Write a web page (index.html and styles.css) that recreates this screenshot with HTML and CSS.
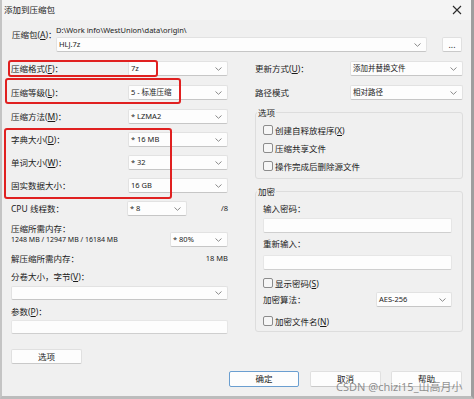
FILE: index.html
```html
<!DOCTYPE html>
<html lang="zh">
<head>
<meta charset="utf-8">
<title>添加到压缩包</title>
<link rel="stylesheet" href="styles.css">
</head>
<body>
<div class="win">
  <div class="titlebar">
    <span class="title">添加到压缩包</span>
    <svg class="close" width="10" height="10" viewBox="0 0 10 10"><path d="M1 1L9 9M9 1L1 9" stroke="#2b2b2b" stroke-width="1.1" fill="none"/></svg>
  </div>
  <div class="content">
    <div class="archive">
      <span class="lbl arch-lbl">压缩包(<u>A</u>)：</span>
      <div class="arch-main">
        <div class="path">D:\Work info\WestUnion\data\origin\</div>
        <div class="arch-row">
          <div class="combo arch-combo"><span class="val">HLJ.7z</span><svg class="chev" width="7" height="4" viewBox="0 0 7 4"><path d="M0.5 0.5L3.5 3.3L6.5 0.5" stroke="#8a8a8a" fill="none"/></svg></div>
          <button class="btn dots">...</button>
        </div>
      </div>
    </div>
    <div class="cols">
      <div class="left">
        <div class="row r24"><span class="lbl">压缩格式(<u>F</u>)：</span><div class="combo c100"><span class="val">7z</span><svg class="chev" width="7" height="4" viewBox="0 0 7 4"><path d="M0.5 0.5L3.5 3.3L6.5 0.5" stroke="#8a8a8a" fill="none"/></svg></div></div>
        <div class="row r24"><span class="lbl">压缩等级(<u>L</u>)：</span><div class="combo c100"><span class="val">5 - 标准压缩</span><svg class="chev" width="7" height="4" viewBox="0 0 7 4"><path d="M0.5 0.5L3.5 3.3L6.5 0.5" stroke="#8a8a8a" fill="none"/></svg></div></div>
        <div class="row r24"><span class="lbl">压缩方法(<u>M</u>)：</span><div class="combo c100"><span class="val">* LZMA2</span><svg class="chev" width="7" height="4" viewBox="0 0 7 4"><path d="M0.5 0.5L3.5 3.3L6.5 0.5" stroke="#8a8a8a" fill="none"/></svg></div></div>
        <div class="row r23"><span class="lbl">字典大小(<u>D</u>)：</span><div class="combo c100"><span class="val">* 16 MB</span><svg class="chev" width="7" height="4" viewBox="0 0 7 4"><path d="M0.5 0.5L3.5 3.3L6.5 0.5" stroke="#8a8a8a" fill="none"/></svg></div></div>
        <div class="row r23"><span class="lbl">单词大小(<u>W</u>)：</span><div class="combo c100"><span class="val">* 32</span><svg class="chev" width="7" height="4" viewBox="0 0 7 4"><path d="M0.5 0.5L3.5 3.3L6.5 0.5" stroke="#8a8a8a" fill="none"/></svg></div></div>
        <div class="row r23"><span class="lbl">固实数据大小：</span><div class="combo c100"><span class="val">16 GB</span><svg class="chev" width="7" height="4" viewBox="0 0 7 4"><path d="M0.5 0.5L3.5 3.3L6.5 0.5" stroke="#8a8a8a" fill="none"/></svg></div></div>
        <div class="row r23"><span class="lbl">CPU 线程数：</span><div class="combo c60"><span class="val">* 8</span><svg class="chev" width="7" height="4" viewBox="0 0 7 4"><path d="M0.5 0.5L3.5 3.3L6.5 0.5" stroke="#8a8a8a" fill="none"/></svg></div><span class="num">/8</span></div>
        <div class="mem">
          <div class="mem-text">
            <div class="lbl">压缩所需内存：</div>
            <div class="small">1248 MB / 12947 MB / 16184 MB</div>
          </div>
          <div class="combo c58"><span class="val">* 80%</span><svg class="chev" width="7" height="4" viewBox="0 0 7 4"><path d="M0.5 0.5L3.5 3.3L6.5 0.5" stroke="#8a8a8a" fill="none"/></svg></div>
        </div>
        <div class="row r16"><span class="lbl">解压缩所需内存：</span><span class="num">18 MB</span></div>
        <div class="lbl vol-lbl">分卷大小，字节(<u>V</u>)：</div>
        <div class="combo full vol"><span class="val"></span><svg class="chev" width="7" height="4" viewBox="0 0 7 4"><path d="M0.5 0.5L3.5 3.3L6.5 0.5" stroke="#8a8a8a" fill="none"/></svg></div>
        <div class="lbl par-lbl">参数(<u>P</u>)：</div>
        <div class="field full par"></div>
        <button class="btn opt">选项</button>
      </div>
      <div class="right">
        <div class="row r24"><span class="lbl">更新方式(<u>U</u>)：</span><div class="combo c113"><span class="val">添加并替换文件</span><svg class="chev" width="7" height="4" viewBox="0 0 7 4"><path d="M0.5 0.5L3.5 3.3L6.5 0.5" stroke="#8a8a8a" fill="none"/></svg></div></div>
        <div class="row r24"><span class="lbl">路径模式</span><div class="combo c113"><span class="val">相对路径</span><svg class="chev" width="7" height="4" viewBox="0 0 7 4"><path d="M0.5 0.5L3.5 3.3L6.5 0.5" stroke="#8a8a8a" fill="none"/></svg></div></div>
        <fieldset class="group g1">
          <legend>选项</legend>
          <label class="cbrow first"><span class="cb"></span>创建自释放程序(<u>X</u>)</label>
          <label class="cbrow"><span class="cb"></span>压缩共享文件</label>
          <label class="cbrow"><span class="cb"></span>操作完成后删除源文件</label>
        </fieldset>
        <fieldset class="group g2">
          <legend>加密</legend>
          <div class="lbl pw1">输入密码：</div>
          <div class="field pwf1"></div>
          <div class="lbl pw2">重新输入：</div>
          <div class="field pwf2"></div>
          <label class="cbrow show"><span class="cb"></span>显示密码(<u>S</u>)</label>
          <div class="row r16"><span class="lbl">加密算法：</span><div class="combo c76"><span class="val">AES-256</span><svg class="chev" width="7" height="4" viewBox="0 0 7 4"><path d="M0.5 0.5L3.5 3.3L6.5 0.5" stroke="#8a8a8a" fill="none"/></svg></div></div>
          <label class="cbrow encn"><span class="cb"></span>加密文件名(<u>N</u>)</label>
        </fieldset>
      </div>
    </div>
    <div class="footer">
      <button class="btn main default">确定</button>
      <button class="btn main">取消</button>
      <button class="btn main">帮助</button>
    </div>
  </div>
  <div class="mark m1"></div>
  <div class="mark m2"></div>
  <div class="mark m3"></div>
  <div class="watermark">CSDN @chizi15_山高月小</div>
</div>
</body>
</html>
```

FILE: styles.css
```css
* { box-sizing: border-box; }
html, body { margin: 0; padding: 0; }
body {
  width: 474px;
  height: 399px;
  overflow: hidden;
  background: #ffffff;
  font-family: "Noto Sans", "Noto Sans CJK SC", sans-serif;
  font-size: 8.5px;
  color: #1b1b1b;
}
u { text-decoration: underline; text-underline-offset: 1px; }

.win {
  position: relative;
  width: 474px;
  height: 399px;
  background: #f0f0f0;
  border-left: 2px solid #c4c4c4;
  border-right: 3px solid #9e9e9e;
  border-bottom: 3px solid #bcbcbc;
}
.titlebar {
  height: 20px;
  display: flex;
  align-items: center;
  justify-content: space-between;
  padding: 0 9px 0 2px;
  background: #f4f4f4;
}
.title { font-size: 8.5px; line-height: 12px; }
.close { display: block; margin-top: -1px; }

.content { padding: 0 8px 0 9px; }

.lbl { line-height: 13px; white-space: nowrap; }

.archive { display: flex; }
.arch-lbl { width: 45px; margin-top: 8px; padding-left: 1px; }
.arch-main { flex: 1; }
.path { font-size: 7.5px; line-height: 11px; margin-top: 5px; }
.arch-row { display: flex; margin-top: 1px; }
.arch-combo { width: 371px; }
.dots { width: 20px; height: 15px; margin-left: 15px; font-size: 7px; line-height: 10px; color: #777; }

.cols { display: flex; gap: 27px; margin-top: 4px; }
.left { width: 217px; display: flex; flex-direction: column; }
.right { width: 208px; display: flex; flex-direction: column; }

.row { display: flex; align-items: center; }
.row .lbl { flex: 1; }
.r24 { height: 24px; }
.r23 { height: 23px; }
.r16 { height: 16px; }

.combo {
  position: relative;
  height: 15px;
  background: #fdfdfd;
  border: 1px solid #e2e2e2;
  border-bottom-color: #c6c6c6;
  border-radius: 2px;
  display: flex;
  align-items: center;
  padding: 0 12px 0 2px;
  font-size: 7.5px;
  line-height: 11px;
  white-space: nowrap;
}
.combo .val { flex: 1; }
.chev { position: absolute; right: 5px; top: 5px; }
.c100 { width: 100px; }
.c60 { width: 60px; margin-right: 34px; }
.c58 { width: 58px; }
.c113 { width: 113px; }
.c76 { width: 76px; }
.full { width: 217px; }
.num { font-size: 7.5px; line-height: 11px; }

.mem { height: 30px; display: flex; justify-content: space-between; }
.mem-text { padding-top: 2px; }
.small { font-size: 7px; line-height: 10px; }
.mem .combo { margin-top: 12px; }

.vol-lbl { margin-top: 4px; }
.vol { margin-top: 3px; height: 14px; }
.vol .chev { top: 4px; }
.par-lbl { margin-top: 5px; }

.field {
  height: 14px;
  background: #fdfdfd;
  border: 1px solid #e6e6e6;
  border-bottom-color: #cfcfcf;
  border-radius: 2px;
}
.par { margin-top: 2px; }

.btn {
  font-family: inherit;
  font-size: 8.5px;
  color: #1b1b1b;
  background: #fdfdfd;
  border: 1px solid #e0e0e0;
  border-bottom-color: #c9c9c9;
  border-radius: 2px;
  padding: 0;
  line-height: 12px;
}
.opt { width: 71px; height: 15px; margin-top: 15px; }

.group {
  margin: 0;
  padding: 0 9px 4px 7px;
  border: 1px solid #dddddd;
  border-radius: 3px;
}
.group legend {
  padding: 0 1px;
  margin-left: -6px;
  line-height: 13px;
  font-size: 8.5px;
}
.g1 { margin-top: 2px; padding-top: 2px; padding-bottom: 4px; }
.g2 { margin-top: 6px; padding-bottom: 2px; }

.cbrow {
  display: flex;
  align-items: center;
  height: 18px;
  white-space: nowrap;
}
.g1 .cbrow:last-child { height: 17px; }
.cb {
  width: 10px;
  height: 10px;
  border: 1px solid #8c8c8c;
  border-radius: 2px;
  background: #f6f6f6;
  margin-right: 2px;
  flex: none;
}
.pw1 { margin-top: 4px; }
.pwf1 { margin-top: 3px; height: 15px; width: 189px; }
.pw2 { margin-top: 4px; }
.pwf2 { margin-top: 5px; height: 15px; width: 189px; }
.show { margin-top: 5px; height: 16px; }
.encn { margin-top: 6px; height: 16px; }
.g2 .row { width: 189px; }

.footer {
  display: flex;
  justify-content: flex-end;
  gap: 11px;
  margin-top: 7px;
  padding-right: 1px;
}
.main { width: 71px; height: 16px; }
.main.default { width: 70px; border: 1px solid #6a9ed0; }
.footer .main + .main + .main { margin-left: -1px; }

.mark {
  position: absolute;
  border: 2px solid #e02020;
  border-radius: 3px;
}
.m1 { left: 6px; top: 60px; width: 150px; height: 17px; }
.m2 { left: 3px; top: 78px; width: 176px; height: 26px; }
.m3 { left: 2px; top: 128px; width: 168px; height: 71px; }

.watermark {
  position: absolute;
  left: 334px;
  top: 379px;
  font-family: "Noto Sans", "Noto Sans CJK SC", sans-serif;
  font-size: 11px;
  line-height: 15px;
  color: rgba(110, 110, 110, 0.75);
  white-space: nowrap;
}
```
